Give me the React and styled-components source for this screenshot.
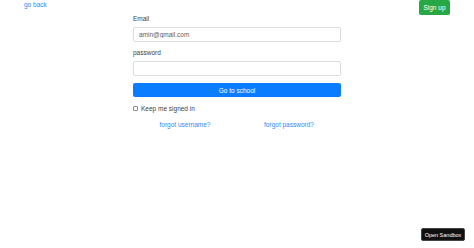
import React from "react";
import styled, { createGlobalStyle } from "styled-components";

const Global = createGlobalStyle`
  html, body { margin: 0; padding: 0; background: #fff; }
  body { font-family: "Liberation Sans", Arial, sans-serif; color: #3a3f44; }
  * { box-sizing: border-box; }
`;

const Header = styled.header`
  display: flex;
  justify-content: space-between;
  align-items: flex-start;
  padding: 0 24px;
  height: 15px;
`;

const Link = styled.a`
  color: #2b8cf5;
  font-size: 6.5px;
  line-height: 9px;
  text-decoration: none;
  cursor: pointer;
`;

const SignUp = styled.button`
  height: 15px;
  width: 31px;
  padding: 0;
  border: none;
  border-radius: 2px;
  background: #28a745;
  color: #fff;
  font-family: inherit;
  font-size: 6.5px;
  line-height: 15px;
`;

const Form = styled.form`
  width: 208px;
  margin: 0 auto;
  display: flex;
  flex-direction: column;
`;

const Label = styled.label`
  display: block;
  font-size: 6.5px;
  line-height: 10px;
  margin: ${(p) => (p.$first ? "-1px" : "6px")} 0 3px;
`;

const Input = styled.input`
  display: block;
  width: 100%;
  height: 15px;
  padding: 0 5px;
  border: 1px solid #d9dee3;
  border-radius: 2px;
  font-family: inherit;
  font-size: 6.5px;
  color: #5a6168;
  outline: none;
`;

const Submit = styled.button`
  margin-top: 7px;
  height: 14px;
  width: 100%;
  border: none;
  border-radius: 2px;
  background: #0a7cff;
  color: #fff;
  font-family: inherit;
  font-size: 6.5px;
`;

const CheckRow = styled.label`
  display: flex;
  align-items: center;
  gap: 3px;
  margin-top: 6px;
  height: 10px;
  font-size: 6.5px;
`;

const Check = styled.input`
  appearance: none;
  width: 5px;
  height: 5px;
  margin: 0;
  border: 1px solid #8a8f94;
  border-radius: 1px;
  background: #fff;
`;

const Links = styled.div`
  display: grid;
  grid-template-columns: 1fr 1fr;
  margin-top: 6px;
  height: 10px;
  align-items: center;
  text-align: center;
`;

const Sandbox = styled.button`
  position: fixed;
  right: 9px;
  bottom: 7px;
  width: 44px;
  height: 13px;
  padding: 0;
  border: 1px solid #444;
  border-radius: 2px;
  background: #111;
  color: #fff;
  font-family: inherit;
  font-size: 5.5px;
`;

export default function App() {
  return (
    <>
      <Global />
      <Header>
        <Link>go back</Link>
        <SignUp>Sign up</SignUp>
      </Header>
      <Form onSubmit={(e) => e.preventDefault()}>
        <Label $first>Email</Label>
        <Input defaultValue="amin@gmail.com" />
        <Label>password</Label>
        <Input type="password" />
        <Submit>Go to school</Submit>
        <CheckRow>
          <Check type="checkbox" />
          Keep me signed in
        </CheckRow>
        <Links>
          <Link>forgot username?</Link>
          <Link>forgot password?</Link>
        </Links>
      </Form>
      <Sandbox>Open Sandbox</Sandbox>
    </>
  );
}
